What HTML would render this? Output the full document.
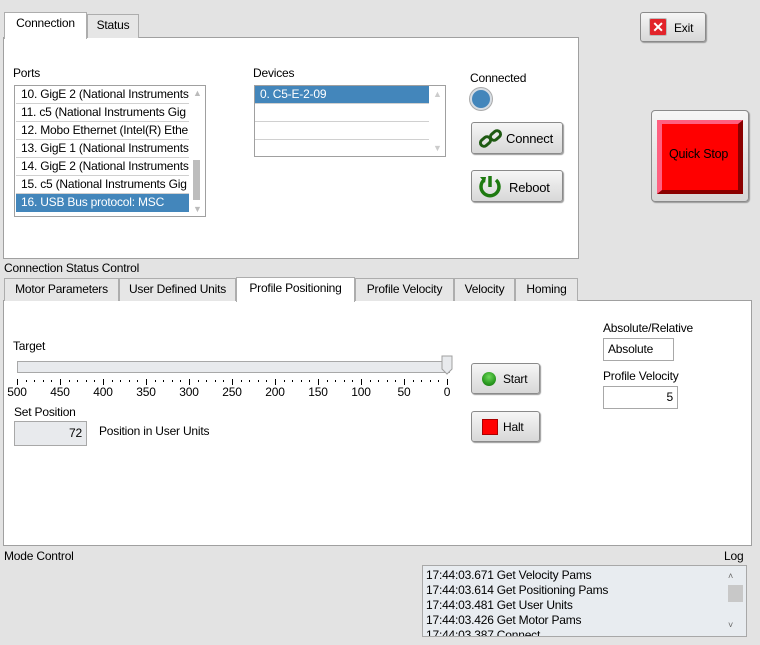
<!DOCTYPE html>
<html><head><style>
*{box-sizing:border-box;margin:0;padding:0}
body{width:760px;height:645px;background:#e3e3e3;font-family:"Liberation Sans",sans-serif;font-size:12px;color:#000;position:relative;overflow:hidden;letter-spacing:-0.2px}
.a{position:absolute;white-space:nowrap}
.panel{position:absolute;background:#fff;border:1px solid #a0a0a0}
.tab{position:absolute;background:#e6e6e6;border:1px solid #adadad;border-bottom:none;text-align:center;line-height:21px}
.tab.on{background:#fff;line-height:20px}
.row{position:absolute;left:1px;height:18px;line-height:17px;padding-left:5px;border-bottom:1px solid #d0d0d0;overflow:hidden;background:#fff}
.sel{background:#4386bb;color:#fff}
.btn{position:absolute;border:1px solid #8a8a8a;border-radius:3px;background:linear-gradient(#f6f6f6,#e6e6e6 50%,#d8d8d8);box-shadow:1px 1px 1px #999}
.box{position:absolute;border:1px solid #a8a8a8;background:#fff;line-height:20px;padding:0 4px}
</style></head><body>

<!-- top panel -->
<div class="panel" style="left:3px;top:37px;width:576px;height:222px"></div>
<div class="tab" style="left:87px;top:14px;width:52px;height:24px">Status</div>
<div class="tab on" style="left:4px;top:12px;width:83px;height:27px;border-color:#adadad">Connection</div>

<div class="a" style="left:13px;top:66px">Ports</div>
<div style="position:absolute;left:14px;top:85px;width:192px;height:132px;border:1px solid #a0a0a0;background:#fff;overflow:hidden">
 <div class="row" style="top:0;width:173px">10. GigE 2 (National Instruments</div>
 <div class="row" style="top:18px;width:173px">11. c5 (National Instruments Gig</div>
 <div class="row" style="top:36px;width:173px">12. Mobo Ethernet (Intel(R) Ethe</div>
 <div class="row" style="top:54px;width:173px">13. GigE 1 (National Instruments</div>
 <div class="row" style="top:72px;width:173px">14. GigE 2 (National Instruments</div>
 <div class="row" style="top:90px;width:173px">15. c5 (National Instruments Gig</div>
 <div class="row sel" style="top:108px;width:173px;border-bottom:none">16. USB Bus protocol: MSC</div>
 <div class="a" style="left:178px;top:2px;font-size:9px;color:#bbb">▲</div>
 <div class="a" style="left:178px;top:74px;width:7px;height:40px;background:#bdbdbd"></div>
 <div class="a" style="left:178px;top:118px;font-size:9px;color:#bbb">▼</div>
</div>

<div class="a" style="left:253px;top:66px">Devices</div>
<div style="position:absolute;left:254px;top:85px;width:192px;height:72px;border:1px solid #a0a0a0;background:#fff;overflow:hidden">
 <div class="row sel" style="left:0;top:0;width:174px;padding-left:5px">0. C5-E-2-09</div>
 <div class="row" style="left:0;top:18px;width:174px"></div>
 <div class="row" style="left:0;top:36px;width:174px"></div>
 <div class="a" style="left:178px;top:3px;font-size:9px;color:#ccc">▲</div>
 <div class="a" style="left:178px;top:57px;font-size:9px;color:#ccc">▼</div>
</div>

<div class="a" style="left:470px;top:71px">Connected</div>
<div class="a" style="left:470px;top:88px;width:22px;height:22px;border-radius:50%;background:#4386bb;border:2px solid #d6dde4;box-shadow:0 0 0 1px #aaa"></div>

<div class="btn" style="left:471px;top:122px;width:92px;height:32px">
 <svg class="a" style="left:6px;top:4px" width="26" height="24" viewBox="0 0 26 24"><g fill="none" stroke="#1e5a12" stroke-width="3"><rect x="2" y="11" width="11" height="7" rx="3.5" transform="rotate(-40 7.5 14.5)"/><rect x="12" y="5" width="11" height="7" rx="3.5" transform="rotate(-40 17.5 8.5)"/></g></svg>
 <div class="a" style="left:34px;top:8px;font-size:13px">Connect</div>
</div>
<div class="btn" style="left:471px;top:170px;width:92px;height:32px">
 <svg class="a" style="left:5px;top:3px" width="26" height="26" viewBox="0 0 26 26"><path d="M7 6 A9 9 0 1 0 19 6" fill="none" stroke="#1e7a10" stroke-width="3.5"/><path d="M13 2 V13" stroke="#1e7a10" stroke-width="3.5"/><path d="M3 3 L9 3 L8 9Z" fill="#1e7a10"/></svg>
 <div class="a" style="left:37px;top:9px;font-size:13px">Reboot</div>
</div>

<div class="btn" style="left:640px;top:12px;width:66px;height:30px">
 <div class="a" style="left:8px;top:5px;width:18px;height:18px;background:#e2232a;border:1px solid #bbb;border-radius:2px;color:#fff;font-weight:bold;text-align:center;line-height:16px;font-size:14px">✕</div>
 <div class="a" style="left:33px;top:8px">Exit</div>
</div>

<div class="btn" style="left:651px;top:110px;width:98px;height:92px;border-radius:4px">
 <div class="a" style="left:5px;top:9px;width:86px;height:74px;background:#ff0000;border-top:4px solid #ff6080;border-left:5px solid #ff6080;border-right:5px solid #8b0000;border-bottom:4px solid #8b0000"></div>
 <div class="a" style="left:17px;top:36px;font-size:12.5px">Quick Stop</div>
</div>

<!-- bottom -->
<div class="a" style="left:4px;top:261px">Connection Status Control</div>
<div class="panel" style="left:3px;top:300px;width:749px;height:246px"></div>
<div class="tab" style="left:4px;top:278px;width:115px;height:23px">Motor Parameters</div>
<div class="tab" style="left:119px;top:278px;width:117px;height:23px">User Defined Units</div>
<div class="tab on" style="left:236px;top:277px;width:119px;height:25px;border-color:#adadad">Profile Positioning</div>
<div class="tab" style="left:355px;top:278px;width:99px;height:23px">Profile Velocity</div>
<div class="tab" style="left:454px;top:278px;width:61px;height:23px">Velocity</div>
<div class="tab" style="left:515px;top:278px;width:63px;height:23px">Homing</div>

<div class="a" style="left:13px;top:339px">Target</div>
<div class="a" style="left:17px;top:361px;width:433px;height:12px;background:#e8eaed;border:1px solid #a8a8a8"></div>
<svg class="a" style="left:441px;top:355px" width="12" height="20"><path d="M1 1H11V14L6 19L1 14Z" fill="#e8eaed" stroke="#a0a0a0"/></svg>
<svg class="a" style="left:0;top:376px" width="460" height="24">
<g stroke="#000" stroke-width="1">
<path d="M17.5 3v6M60.5 3v6M103.5 3v6M146.5 3v6M189.5 3v6M232.5 3v6M275.5 3v6M318.5 3v6M361.5 3v6M404.5 3v6M447.5 3v6"/>
<path d="M26.5 4v2M34.5 4v2M43.5 4v2M51.5 4v2M69.5 4v2M77.5 4v2M86.5 4v2M94.5 4v2M112.5 4v2M120.5 4v2M129.5 4v2M137.5 4v2M155.5 4v2M163.5 4v2M172.5 4v2M180.5 4v2M198.5 4v2M206.5 4v2M215.5 4v2M223.5 4v2M241.5 4v2M249.5 4v2M258.5 4v2M266.5 4v2M284.5 4v2M292.5 4v2M301.5 4v2M309.5 4v2M327.5 4v2M335.5 4v2M344.5 4v2M352.5 4v2M370.5 4v2M378.5 4v2M387.5 4v2M395.5 4v2M413.5 4v2M421.5 4v2M430.5 4v2M438.5 4v2"/>
</g>
<g font-family="Liberation Sans" font-size="12" text-anchor="middle">
<text x="17" y="20">500</text><text x="60" y="20">450</text><text x="103" y="20">400</text><text x="146" y="20">350</text><text x="189" y="20">300</text><text x="232" y="20">250</text><text x="275" y="20">200</text><text x="318" y="20">150</text><text x="361" y="20">100</text><text x="404" y="20">50</text><text x="447" y="20">0</text></g>
</svg>

<div class="a" style="left:14px;top:405px">Set Position</div>
<div class="box" style="left:14px;top:421px;width:73px;height:25px;background:#e8eaed;text-align:right;line-height:23px">72</div>
<div class="a" style="left:99px;top:424px">Position in User Units</div>

<div class="btn" style="left:471px;top:363px;width:69px;height:31px">
 <div class="a" style="left:10px;top:8px;width:14px;height:14px;border-radius:50%;background:radial-gradient(circle at 50% 35%,#6ed85a,#2a9a20 60%,#1a6a12)"></div>
 <div class="a" style="left:31px;top:8px">Start</div>
</div>
<div class="btn" style="left:471px;top:411px;width:69px;height:31px">
 <div class="a" style="left:10px;top:7px;width:16px;height:16px;background:#f00;border:1px solid #a00"></div>
 <div class="a" style="left:31px;top:8px">Halt</div>
</div>

<div class="a" style="left:603px;top:321px">Absolute/Relative</div>
<div class="box" style="left:603px;top:338px;width:71px;height:23px">Absolute</div>
<div class="a" style="left:603px;top:369px">Profile Velocity</div>
<div class="box" style="left:603px;top:386px;width:75px;height:23px;text-align:right">5</div>

<div class="a" style="left:4px;top:549px">Mode Control</div>
<div class="a" style="left:724px;top:549px">Log</div>
<div style="position:absolute;left:422px;top:565px;width:325px;height:72px;border:1px solid #a8a8a8;background:#e8ecf0;overflow:hidden;line-height:15px;padding:2px 0 0 3px">
17:44:03.671 Get Velocity Pams<br>17:44:03.614 Get Positioning Pams<br>17:44:03.481 Get User Units<br>17:44:03.426 Get Motor Pams<br>17:44:03.387 Connect
 <div class="a" style="left:305px;top:3px;font-size:9px;color:#666">˄</div>
 <div class="a" style="left:305px;top:19px;width:15px;height:17px;background:#c8c8c8"></div>
 <div class="a" style="left:305px;top:52px;font-size:9px;color:#666">˅</div>
</div>
</body></html>
